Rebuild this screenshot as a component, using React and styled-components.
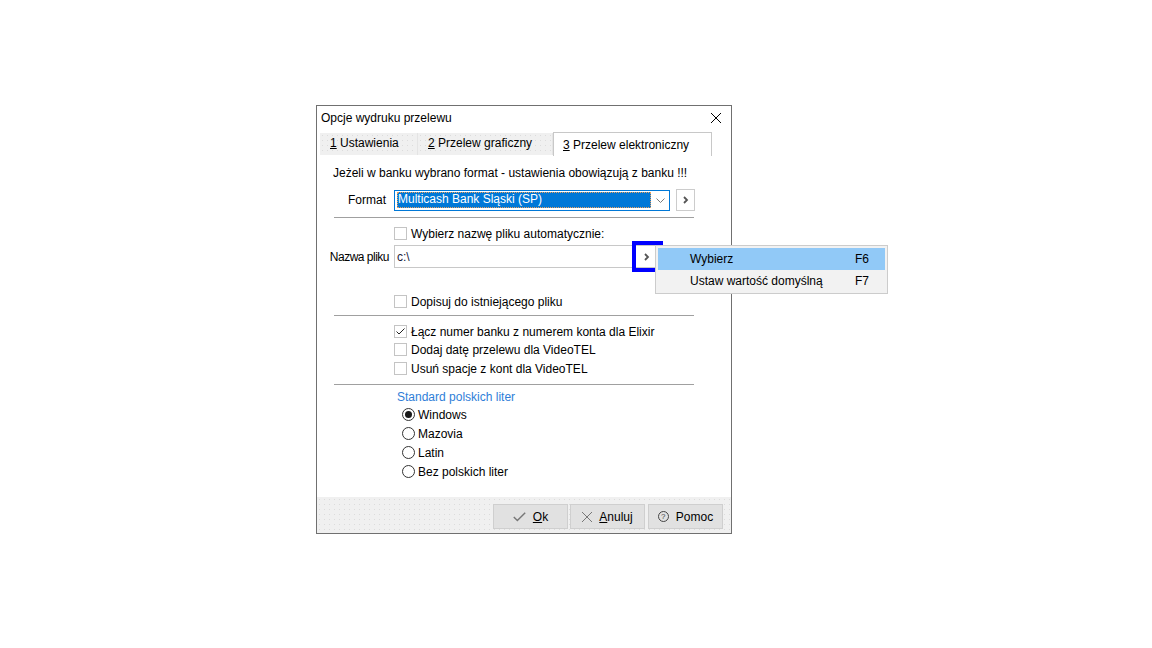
import React from 'react';
import styled, { createGlobalStyle } from 'styled-components';

const GlobalStyle = createGlobalStyle`
  html, body { margin: 0; padding: 0; background: #ffffff; }
  body { font-family: 'Liberation Sans', Arial, sans-serif; font-size: 12px; color: #000; }
`;

const dither = `
  background-color: #f0f0f0;
  background-image: radial-gradient(circle, #dcdcdc 0.6px, transparent 0.9px);
  background-size: 5px 5px;
`;

const Page = styled.div`
  width: 1152px;
  height: 648px;
  box-sizing: border-box;
  padding: 105px 0 0 316px;
`;

const Dialog = styled.div`
  position: relative;
  width: 416px;
  height: 429px;
  box-sizing: border-box;
  border: 1px solid #707070;
  background: #ffffff;
  display: flex;
  flex-direction: column;
`;

const TitleBar = styled.div`
  height: 24px;
  display: flex;
  align-items: center;
  justify-content: space-between;
  padding: 0 10px 0 4px;
  font-size: 12px;
`;

const TabStrip = styled.div`
  height: 26px;
  display: flex;
  align-items: flex-end;
  padding-left: 3px;
`;

const Tab = styled.div`
  box-sizing: border-box;
  width: ${(p) => p.$w}px;
  height: ${(p) => (p.$active ? 24 : 22)}px;
  margin-bottom: ${(p) => (p.$active ? 0 : 1)}px;
  padding: ${(p) => (p.$active ? '5px 0 0 9px' : '3px 0 0 10px')};
  ${(p) => (p.$active ? 'background: #ffffff;' : dither)}
  border: ${(p) => (p.$active ? '1px solid #c8c8c8' : 'none')};
  border-bottom: none;
  border-right: ${(p) => (p.$active ? '1px solid #c8c8c8' : '1px solid #e4e4e4')};
  white-space: nowrap;
  u { text-decoration: underline; }
`;

const Content = styled.div`
  position: relative;
  flex: 1;
  padding-left: 16px;
  display: flex;
  flex-direction: column;
`;

const TextRow = styled.div`
  height: 16px;
  line-height: 16px;
  margin-top: ${(p) => p.$top}px;
  margin-left: ${(p) => p.$indent || 0}px;
  color: ${(p) => p.$color || '#000'};
  white-space: nowrap;
`;

const FieldRow = styled.div`
  position: relative;
  display: flex;
  align-items: center;
  height: ${(p) => p.$h}px;
  margin-top: ${(p) => p.$top}px;
`;

const FieldLabel = styled.div`
  width: 56px;
  flex: none;
  display: flex;
  justify-content: flex-end;
  box-sizing: border-box;
  padding-right: ${(p) => p.$pad}px;
  margin-right: 5px;
  white-space: nowrap;
  letter-spacing: ${(p) => p.$tight || 0}px;
`;

const Select = styled.div`
  box-sizing: border-box;
  width: 276px;
  height: 21px;
  border: 1px solid #0078d7;
  display: flex;
  align-items: center;
  padding-left: 2px;
`;

const SelectedValue = styled.div`
  box-sizing: border-box;
  width: 254px;
  height: 16px;
  line-height: 14px;
  background: #0078d7;
  color: #ffffff;
  outline: 1px dotted #e8a060;
  outline-offset: -1px;
  padding-left: 1px;
  white-space: nowrap;
`;

const DropArrow = styled.div`
  flex: 1;
  display: flex;
  justify-content: center;
  align-items: center;
`;

const SquareButton = styled.div`
  box-sizing: border-box;
  width: ${(p) => p.$w}px;
  height: ${(p) => p.$h}px;
  margin-left: ${(p) => p.$gap || 0}px;
  border: ${(p) => (p.$flat ? 'none' : '1px solid #cccccc')};
  background: #ffffff;
  display: flex;
  align-items: center;
  justify-content: center;
`;

const Separator = styled.div`
  width: 360px;
  height: 1px;
  margin-left: 1px;
  margin-top: ${(p) => p.$top}px;
  background: #a0a0a0;
`;

const OptionRow = styled.div`
  display: flex;
  align-items: center;
  height: 13px;
  margin-top: ${(p) => p.$top}px;
  margin-left: ${(p) => p.$indent}px;
  white-space: nowrap;
`;

const CheckBox = styled.div`
  box-sizing: border-box;
  width: 13px;
  height: 13px;
  border: 1px solid #c4c4c4;
  background: #ffffff;
  margin-right: 4px;
  display: flex;
  align-items: center;
  justify-content: center;
`;

const Radio = styled.div`
  box-sizing: border-box;
  width: 13px;
  height: 13px;
  border-radius: 50%;
  border: 1px solid #333333;
  margin-right: 3px;
  display: flex;
  align-items: center;
  justify-content: center;
  &::after {
    content: '';
    display: ${(p) => (p.$on ? 'block' : 'none')};
    width: 7px;
    height: 7px;
    border-radius: 50%;
    background: #1a1a1a;
  }
`;

const FileInput = styled.div`
  box-sizing: border-box;
  width: 267px;
  height: 23px;
  border: 1px solid #c8c8c8;
  display: flex;
  align-items: center;
  justify-content: space-between;
  padding: 0 1px 0 2px;
  color: #1a1a3a;
`;

const Highlight = styled.div`
  position: absolute;
  left: 299px;
  top: -4px;
  width: 31px;
  height: 31px;
  box-sizing: border-box;
  border: 4px solid #0000ff;
`;

const Menu = styled.div`
  position: absolute;
  left: 322px;
  top: 0;
  width: 233px;
  height: 49px;
  box-sizing: border-box;
  border: 1px solid #cccccc;
  background: #f2f2f2;
  padding: 2px;
  z-index: 5;
`;

const MenuItem = styled.div`
  display: grid;
  grid-template-columns: 165px 1fr;
  height: 22px;
  line-height: 22px;
  padding-left: 32px;
  background: ${(p) => (p.$active ? '#91c9f7' : 'transparent')};
  white-space: nowrap;
`;

const Footer = styled.div`
  height: 36px;
  ${dither}
  display: flex;
  justify-content: flex-end;
  align-items: flex-start;
  gap: 2px;
  padding: 7px 8px 0 0;
  box-sizing: border-box;
`;

const FooterButton = styled.div`
  box-sizing: border-box;
  width: 75px;
  height: 25px;
  margin-left: ${(p) => p.$gap || 0}px;
  border: 1px solid #cfcfcf;
  background: #e1e1e1;
  display: flex;
  align-items: center;
  justify-content: center;
  gap: 7px;
  u { text-decoration: underline; }
`;

const HelpIcon = styled.span`
  box-sizing: border-box;
  width: 11px;
  height: 11px;
  border-radius: 50%;
  border: 1px solid #444;
  font-size: 8px;
  line-height: 9px;
  text-align: center;
  color: #444;
`;

const Chevron = () => (
  <svg width="6" height="8" viewBox="0 0 6 8">
    <polyline points="1,1 4,4 1,7" fill="none" stroke="#555" strokeWidth="1.8" />
  </svg>
);

const Tick = ({ color = '#222', w = 9, h = 7 }) => (
  <svg width={w} height={h} viewBox="0 0 9 7">
    <polyline points="0.5,3.5 3,6 8.5,0.5" fill="none" stroke={color} strokeWidth="1" />
  </svg>
);

const Cross = ({ size = 10, color = '#000' }) => (
  <svg width={size} height={size} viewBox="0 0 10 10">
    <line x1="0" y1="0" x2="10" y2="10" stroke={color} strokeWidth="1" />
    <line x1="10" y1="0" x2="0" y2="10" stroke={color} strokeWidth="1" />
  </svg>
);

const Check = ({ on, children, top }) => (
  <OptionRow $top={top} $indent={61}>
    <CheckBox>{on && <Tick />}</CheckBox>
    {children}
  </OptionRow>
);

const RadioOption = ({ on, children, top }) => (
  <OptionRow $top={top} $indent={69}>
    <Radio $on={on} />
    {children}
  </OptionRow>
);

export default function App() {
  return (
    <Page>
      <GlobalStyle />
      <Dialog>
        <TitleBar>
          <span>Opcje wydruku przelewu</span>
          <Cross />
        </TitleBar>

        <TabStrip>
          <Tab $w={98}><u>1</u> Ustawienia</Tab>
          <Tab $w={135}><u>2</u> Przelew graficzny</Tab>
          <Tab $w={159} $active><u>3</u> Przelew elektroniczny</Tab>
        </TabStrip>

        <Content>
          <TextRow $top={9}>Jeżeli w banku wybrano format - ustawienia obowiązują z banku !!!</TextRow>

          <FieldRow $h={22} $top={8}>
            <FieldLabel $pad={3}>Format</FieldLabel>
            <Select>
              <SelectedValue>Multicash Bank Śląski (SP)</SelectedValue>
              <DropArrow>
                <svg width="9" height="5" viewBox="0 0 9 5">
                  <polyline points="0.5,0.5 4.5,4.5 8.5,0.5" fill="none" stroke="#7a7a7a" strokeWidth="1" />
                </svg>
              </DropArrow>
            </Select>
            <SquareButton $w={19} $h={22} $gap={6}><Chevron /></SquareButton>
          </FieldRow>

          <Separator $top={6} />

          <Check top={9}>Wybierz nazwę pliku automatycznie:</Check>

          <FieldRow $h={23} $top={5}>
            <FieldLabel $pad={0} $tight={-0.5}>Nazwa pliku</FieldLabel>
            <FileInput>
              <span>c:\</span>
              <SquareButton $w={24} $h={19} $flat><Chevron /></SquareButton>
            </FileInput>
            <Highlight />
            <Menu>
              <MenuItem $active><span>Wybierz</span><span>F6</span></MenuItem>
              <MenuItem><span>Ustaw wartość domyślną</span><span>F7</span></MenuItem>
            </Menu>
          </FieldRow>

          <Check top={27}>Dopisuj do istniejącego pliku</Check>

          <Separator $top={7} />

          <Check on top={9}>Łącz numer banku z numerem konta dla Elixir</Check>
          <Check top={5}>Dodaj datę przelewu dla VideoTEL</Check>
          <Check top={6}>Usuń spacje z kont dla VideoTEL</Check>

          <Separator $top={9} />

          <TextRow $top={4} $indent={64} $color="#2f7ed8">Standard polskich liter</TextRow>
          <RadioOption on top={3}>Windows</RadioOption>
          <RadioOption top={6}>Mazovia</RadioOption>
          <RadioOption top={6}>Latin</RadioOption>
          <RadioOption top={6}>Bez polskich liter</RadioOption>
        </Content>

        <Footer>
          <FooterButton>
            <Tick color="#777" w={13} h={10} />
            <span><u>O</u>k</span>
          </FooterButton>
          <FooterButton>
            <Cross size={10} color="#777" />
            <span><u>A</u>nuluj</span>
          </FooterButton>
          <FooterButton $gap={1}>
            <HelpIcon>?</HelpIcon>
            <span>Pomoc</span>
          </FooterButton>
        </Footer>
      </Dialog>
    </Page>
  );
}
